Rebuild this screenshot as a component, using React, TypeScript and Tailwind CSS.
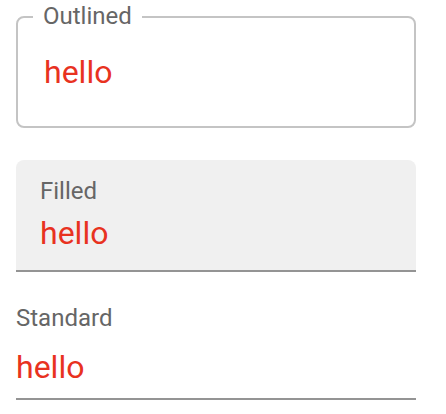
export default function App() {
  return (
    <div className="w-[446px] h-[414px] bg-white font-['Roboto',sans-serif]">
      <div className="pt-[16px] pl-[16px] flex flex-col">
        {/* Outlined */}
        <fieldset className="w-[400px] border-2 border-[#c4c4c4] rounded-lg mt-[-12px]">
          <legend className="ml-[15px] px-[10px] pb-[2px] text-[24px] leading-[24px] text-[#666]">Outlined</legend>
          <div className="pt-[19px] pb-[31px] pl-[26px] text-[32px] leading-[46px] text-[#e8321f]">hello</div>
        </fieldset>

        {/* Filled */}
        <div className="mt-[32px] w-[400px] h-[112px] bg-[#f0f0f0] rounded-t-lg border-b-2 border-[#949494] pl-[24px] pt-[14px]">
          <div className="text-[24px] leading-[34px] text-[#666]">Filled</div>
          <div className="text-[32px] leading-[46px] text-[#e8321f] mt-[2px]">hello</div>
        </div>

        {/* Standard */}
        <div className="mt-[29px] w-[400px]">
          <div className="text-[24px] leading-[34px] text-[#666]">Standard</div>
          <div className="mt-[9px] pb-[8px] border-b-2 border-[#949494] text-[32px] leading-[46px] text-[#e8321f]">hello</div>
        </div>
      </div>
    </div>
  );
}
